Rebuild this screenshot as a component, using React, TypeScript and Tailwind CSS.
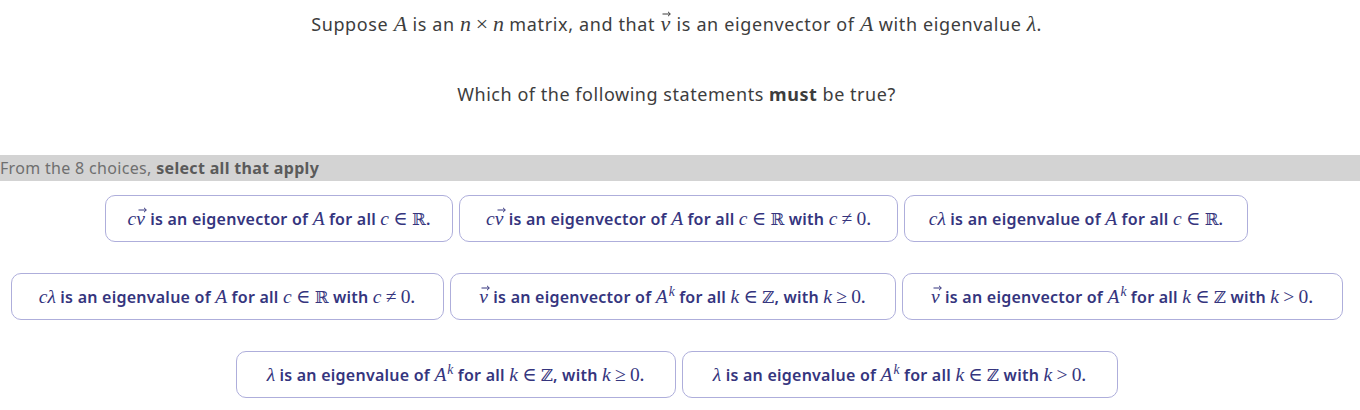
import React from "react";

const M = ({ children }: { children: React.ReactNode }) => (
  <span className="[font-family:'Liberation_Serif','DejaVu_Serif',serif] italic text-[1.22em] font-normal leading-none tracking-normal">{children}</span>
);
const Rel = ({ children }: { children: React.ReactNode }) => (
  <span className="[font-family:'Liberation_Serif','DejaVu_Serif',serif] text-[1.22em] font-normal leading-none mx-[0.22em] tracking-normal">{children}</span>
);
const R = ({ children }: { children: React.ReactNode }) => (
  <span className="[font-family:'Liberation_Serif','DejaVu_Serif',serif] text-[1.22em] font-normal leading-none tracking-normal">{children}</span>
);
const BB = ({ children }: { children: React.ReactNode }) => (
  <span className="[font-family:'DejaVu_Serif',serif] text-[1.04em] font-normal leading-none tracking-normal">{children}</span>
);
const Vec = () => (
  <span className="relative inline-block [font-family:'Liberation_Serif','DejaVu_Serif',serif] italic text-[1.22em] font-normal leading-none tracking-normal pr-[1px]">
    v
    <svg
      className="absolute left-[2px] top-[-2px] w-[9px] h-[6px]"
      viewBox="0 0 9 6"
      fill="none"
      stroke="currentColor"
      strokeWidth="1"
    >
      <path d="M0.5 3H8.2M6 0.8L8.3 3L6 5.2" />
    </svg>
  </span>
);
const Ak = () => (
  <span className="[font-family:'Liberation_Serif','DejaVu_Serif',serif] italic text-[1.22em] font-normal leading-none tracking-normal">
    A<sup className="text-[0.7em] top-[-0.5em] ml-[1px]">k</sup>
  </span>
);

const Btn = ({ w, children }: { w: string; children: React.ReactNode }) => (
  <div
    className={`${w} h-[47px] flex items-center justify-center rounded-[10px] border border-[#aeaedb] bg-white text-[16px] font-semibold tracking-[0.015em] text-[#35357e] whitespace-nowrap`}
  >
    <span>{children}</span>
  </div>
);

export default function App() {
  return (
    <div className="w-[1360px] h-[410px] bg-white [font-family:'Noto_Sans','Open_Sans',sans-serif] overflow-hidden">
      <div className="pr-[7px] pt-[11px] text-center text-[18px] text-[#3d3d3d]">
        <p className="leading-[26px] tracking-[0.035em]">
          Suppose <M>A</M> is an <M>n</M>
          <Rel>×</Rel>
          <M>n</M> matrix, and that <Vec /> is an eigenvector of <M>A</M> with eigenvalue <M>λ</M>.
        </p>
        <p className="mt-[44px] leading-[26px] tracking-[0.03em]">
          Which of the following statements <b className="font-bold">must</b> be true?
        </p>
      </div>
      <div className="mt-[48px] h-[26px] bg-[#d3d3d3] flex items-center text-[16px] text-[#6f6f6f] tracking-[0.02em]">
        <span>
          From the 8 choices, <b className="font-bold text-[#5a5a5a]">select all that apply</b>
        </span>
      </div>
      <div className="pr-[7px] flex flex-col items-center gap-[31px] mt-[14px]">
        <div className="flex gap-[6px]">
          <Btn w="w-[348px]">
            <M>c</M>
            <Vec /> is an eigenvector of <M>A</M> for all <M>c</M>
            <Rel>∈</Rel>
            <BB>ℝ</BB>.
          </Btn>
          <Btn w="w-[439px]">
            <M>c</M>
            <Vec /> is an eigenvector of <M>A</M> for all <M>c</M>
            <Rel>∈</Rel>
            <BB>ℝ</BB> with <M>c</M>
            <Rel>≠</Rel>
            <R>0</R>.
          </Btn>
          <Btn w="w-[344px]">
            <M>cλ</M> is an eigenvalue of <M>A</M> for all <M>c</M>
            <Rel>∈</Rel>
            <BB>ℝ</BB>.
          </Btn>
        </div>
        <div className="flex gap-[6px]">
          <Btn w="w-[433px]">
            <M>cλ</M> is an eigenvalue of <M>A</M> for all <M>c</M>
            <Rel>∈</Rel>
            <BB>ℝ</BB> with <M>c</M>
            <Rel>≠</Rel>
            <R>0</R>.
          </Btn>
          <Btn w="w-[446px]">
            <Vec /> is an eigenvector of <Ak /> for all <M>k</M>
            <Rel>∈</Rel>
            <BB>ℤ</BB>, with <M>k</M>
            <Rel>≥</Rel>
            <R>0</R>.
          </Btn>
          <Btn w="w-[441px]">
            <Vec /> is an eigenvector of <Ak /> for all <M>k</M>
            <Rel>∈</Rel>
            <BB>ℤ</BB> with <M>k</M>
            <Rel>&gt;</Rel>
            <R>0</R>.
          </Btn>
        </div>
        <div className="flex gap-[6px]">
          <Btn w="w-[440px]">
            <M>λ</M> is an eigenvalue of <Ak /> for all <M>k</M>
            <Rel>∈</Rel>
            <BB>ℤ</BB>, with <M>k</M>
            <Rel>≥</Rel>
            <R>0</R>.
          </Btn>
          <Btn w="w-[436px]">
            <M>λ</M> is an eigenvalue of <Ak /> for all <M>k</M>
            <Rel>∈</Rel>
            <BB>ℤ</BB> with <M>k</M>
            <Rel>&gt;</Rel>
            <R>0</R>.
          </Btn>
        </div>
      </div>
    </div>
  );
}
